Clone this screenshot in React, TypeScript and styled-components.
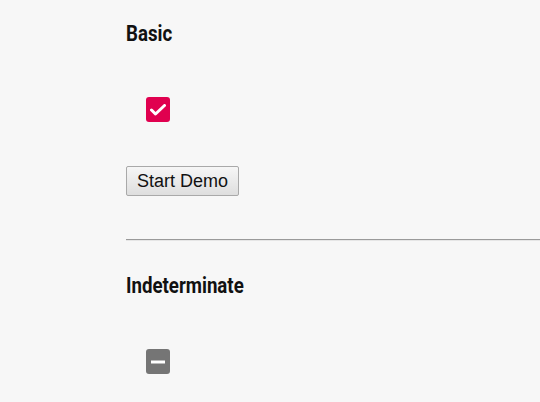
import styled, { createGlobalStyle } from 'styled-components';

const GlobalStyle = createGlobalStyle`
  html, body {
    margin: 0;
    padding: 0;
    background: #f7f7f7;
    overflow: hidden;
  }
`;

const Page = styled.main`
  padding: 18px 0 0 126px;
  width: 414px;
  font-family: Roboto, 'Liberation Sans', sans-serif;
`;

const Section = styled.section`
  display: flex;
  flex-direction: column;
  align-items: flex-start;
`;

const Heading = styled.h2`
  margin: 0;
  font-size: 22.5px;
  line-height: 30px;
  font-weight: 700;
  color: #111;
  display: inline-block;
  transform: scaleX(0.83);
  transform-origin: left center;
`;

const BoxWrap = styled.div`
  padding: 49px 20px 44px;
  display: flex;
`;

const Box = styled.span<{ $tone: 'checked' | 'mixed' }>`
  width: 24px;
  height: 25px;
  border-radius: 3px;
  display: flex;
  align-items: center;
  justify-content: center;
  background: ${p => (p.$tone === 'checked' ? '#e0004f' : '#757575')};
`;

const DemoButton = styled.button`
  font-family: 'Liberation Sans', Arial, sans-serif;
  font-size: 18px;
  line-height: 20px;
  color: #111;
  padding: 4px 10px;
  height: 30px;
  border: 1px solid #a9a9a9;
  border-radius: 2px;
  background: linear-gradient(#f6f6f6, #dedede);
`;

const Rule = styled.hr`
  width: 100%;
  margin: 43px 0 29px;
  border: 0;
  border-top: 1px solid #9a9a9a;
  border-bottom: 1px solid #e6e6e6;
`;

function Check() {
  return (
    <svg width="16" height="12" viewBox="0 0 16 12" fill="none">
      <path d="M1.5 6 L5.5 10 L14.5 1.5" stroke="#fff" strokeWidth="3" strokeLinecap="round" strokeLinejoin="round" />
    </svg>
  );
}

function Dash() {
  return (
    <svg width="16" height="4" viewBox="0 0 16 4">
      <rect x="1" y="0.5" width="14" height="3" fill="#fff" />
    </svg>
  );
}

export default function App() {
  return (
    <>
      <GlobalStyle />
      <Page>
        <Section>
          <Heading>Basic</Heading>
          <BoxWrap>
            <Box $tone="checked">
              <Check />
            </Box>
          </BoxWrap>
          <DemoButton>Start Demo</DemoButton>
        </Section>
        <Rule />
        <Section>
          <Heading>Indeterminate</Heading>
          <BoxWrap>
            <Box $tone="mixed">
              <Dash />
            </Box>
          </BoxWrap>
        </Section>
      </Page>
    </>
  );
}
